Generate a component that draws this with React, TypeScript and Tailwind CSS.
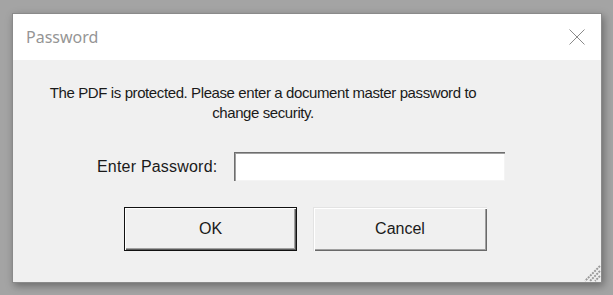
const App = () => {
  return (
    <div className="w-[613px] h-[295px] bg-[#a4a4a4] pt-[13px] pl-[12px]" style={{ fontFamily: '"Liberation Sans", Arial, sans-serif' }}>
      <div className="w-[590px] h-[270px] flex flex-col border border-[#8a8a8a] bg-[#f0f0f0] shadow-[2px_3px_8px_rgba(0,0,0,0.35)]">
        {/* title bar */}
        <div className="h-[46px] bg-white flex items-center justify-between pl-[13px] pr-[16px]">
          <span className="text-[16px] text-[#959595] pb-[1px]" style={{ fontFamily: '"Noto Sans", "Open Sans", sans-serif' }}>Password</span>
          <svg width="16" height="16" viewBox="0 0 16 16" className="mb-[1px]">
            <path d="M0.5 0.5 L15.5 15.5 M15.5 0.5 L0.5 15.5" stroke="#8a8a8a" strokeWidth="1" fill="none" />
          </svg>
        </div>

        <div className="flex-1 flex flex-col text-[#1a1a1a]">
          <p className="w-[460px] ml-[20px] mt-[23px] text-center text-[15px] tracking-[-0.4px] leading-[20px]">
            The PDF is protected. Please enter a document master password to
            <br />
            change security.
          </p>

          <div className="flex items-center mt-[29px] pl-[84px] text-[16px]">
            <label className="w-[137px] tracking-[0.2px]">Enter Password:</label>
            <input
              type="password"
              className="w-[271px] h-[29px] bg-white outline-none shadow-[inset_1px_1px_0_#6e6e6e,inset_2px_2px_0_#a0a0a0,inset_-1px_-1px_0_#f4f4f4]"
            />
          </div>

          <div className="flex gap-[16px] mt-[26px] pl-[111px] text-[16px]">
            <button className="w-[173px] h-[44px] border border-[#111] bg-[#f0f0f0] shadow-[inset_1px_1px_0_#fff,inset_-1px_-1px_0_#5a5a5a,inset_-2px_-2px_0_#a0a0a0]">
              OK
            </button>
            <button className="w-[174px] h-[44px] bg-[#f0f0f0] shadow-[inset_1px_1px_0_#e3e3e3,inset_2px_2px_0_#fff,inset_-1px_-1px_0_#696969,inset_-2px_-2px_0_#a0a0a0]">
              Cancel
            </button>
          </div>

          <div className="mt-auto flex justify-end">
            <svg width="18" height="18" viewBox="0 0 18 18">
              <path d="M17 2 L2 17 M17 7 L7 17 M17 12 L12 17" stroke="#9a9a9a" strokeWidth="2" strokeDasharray="2 1" fill="none" />
            </svg>
          </div>
        </div>
      </div>
    </div>
  );
};

export default App;
